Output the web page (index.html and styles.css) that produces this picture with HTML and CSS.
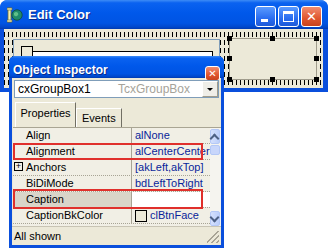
FILE: index.html
```html
<!DOCTYPE html>
<html lang="en">
<head>
    <meta charset="UTF-8">
    <title>Edit Color</title>
    <link rel="stylesheet" href="styles.css">
</head>
<body>

<div class="desk">

    <!-- form being designed -->
    <div class="win edit">
        <div class="caption">
            <svg class="appicon" width="16" height="16" viewBox="0 0 16 16">
                <rect x="1" y="1" width="3" height="14" fill="#f4f0b0" stroke="#6b6a3a" stroke-width="0.8"/>
                <rect x="0" y="1" width="5" height="2" fill="#f4f0b0" stroke="#6b6a3a" stroke-width="0.6"/>
                <rect x="0" y="13" width="5" height="2" fill="#f4f0b0" stroke="#6b6a3a" stroke-width="0.6"/>
                <circle cx="10" cy="8" r="5.2" fill="#1f8a6a" stroke="#0d4a3a" stroke-width="0.8"/>
                <path d="M7 6 q2 -2 4 0 q1 2 -1 3 q-2 1 -3 -1z" fill="#5fc08a"/>
            </svg>
            <span class="title">Edit Color</span>
            <div class="capbtns">
                <div class="capbtn"><span class="g-min"></span></div>
                <div class="capbtn"><span class="g-max"></span></div>
                <div class="capbtn close"><span class="g-x">&#x2715;</span></div>
            </div>
        </div>
        <div class="client">
            <div class="groupbox">
                <div class="check"></div>
                <div class="field"></div>
            </div>
            <div class="panel">
                <span class="h h1"></span><span class="h h2"></span><span class="h h3"></span>
                <span class="h h4"></span><span class="h h5"></span>
                <span class="h h6"></span><span class="h h7"></span><span class="h h8"></span>
            </div>
        </div>
    </div>

    <!-- object inspector -->
    <div class="win oi">
        <div class="caption small">
            <span class="title">Object Inspector</span>
            <div class="capbtn close mini"><span class="g-x">&#x2715;</span></div>
        </div>
        <div class="client">
            <div class="combo">
                <span class="cname">cxGroupBox1</span>
                <span class="ctype">TcxGroupBox</span>
                <div class="dropbtn"><span class="arrow"></span></div>
            </div>
            <div class="tabs">
                <div class="tab active">Properties</div>
                <div class="tab">Events</div>
            </div>
            <div class="grid">
                <div class="rows">
                    <div class="row"><div class="name">Align</div><div class="val">alNone</div></div>
                    <div class="row"><div class="name">Alignment</div><div class="val">alCenterCenter</div></div>
                    <div class="row"><div class="name"><span class="plus">+</span>Anchors</div><div class="val">[akLeft,akTop]</div></div>
                    <div class="row"><div class="name">BiDiMode</div><div class="val">bdLeftToRight</div></div>
                    <div class="row sel"><div class="name">Caption</div><div class="val"></div></div>
                    <div class="row"><div class="name">CaptionBkColor</div><div class="val"><span class="swatch"></span>clBtnFace</div></div>
                    <div class="mark m1"></div>
                    <div class="mark m2"></div>
                </div>
                <div class="scroll">
                    <div class="sbtn"><span class="up"></span></div>
                    <div class="thumb"></div>
                    <div class="track"></div>
                    <div class="sbtn"><span class="down"></span></div>
                </div>
            </div>
            <div class="status">
                <span>All shown</span>
                <span class="grip"></span>
            </div>
        </div>
    </div>

</div>

</body>
</html>
```

FILE: styles.css
```css
body {
    margin: 0;
    background: #ffffff;
    font-family: "Liberation Sans", Arial, sans-serif;
}
.desk {
    position: relative;
    width: 328px;
    height: 248px;
    overflow: hidden;
}

/* window frames */
.win {
    display: flex;
    flex-direction: column;
    background: #0a4fdc;
    box-sizing: border-box;
}
.caption {
    display: flex;
    align-items: center;
    height: 29px;
    flex: none;
    border-radius: 7px 7px 0 0;
    background: linear-gradient(to bottom, #3d8cf6 0%, #0a62f0 10%, #0058ea 45%, #0054e3 80%, #0048cc 93%, #003ab0 100%);
}
.caption .title {
    color: #ffffff;
    font-weight: bold;
    font-size: 13px;
    text-shadow: 1px 1px #0b2a8a;
}
.appicon {
    margin: 1px 5px 0 7px;
}

.capbtns {
    display: flex;
    gap: 2px;
    margin-left: auto;
    margin-right: 6px;
    margin-top: 3px;
}
.capbtn {
    width: 19px;
    height: 19px;
    border: 1px solid #ffffff;
    border-radius: 3px;
    background: linear-gradient(to bottom, #5a9bff, #2a6df0 60%, #1e5ad8);
    position: relative;
    display: flex;
    align-items: center;
    justify-content: center;
}
.capbtn.close {
    background: linear-gradient(to bottom, #f08c70, #e0562e 60%, #c8421c);
}
.g-min {
    position: absolute;
    left: 5px;
    bottom: 4px;
    width: 7px;
    height: 3px;
    background: #ffffff;
}
.g-max {
    width: 9px;
    height: 7px;
    border: 1px solid #ffffff;
    border-top-width: 3px;
}
.g-x {
    color: #ffffff;
    font-family: "DejaVu Sans", sans-serif;
    font-weight: bold;
    font-size: 13px;
    line-height: 1;
}

/* Edit Color form */
.edit {
    width: 328px;
    height: 92px;
    border-radius: 8px 8px 0 0;
}
.edit .client {
    position: relative;
    flex: 1;
    margin: 0 5px 4px 4px;
    background-color: #ece9d8;
    background-image:
        linear-gradient(90deg, #ece9d8 3px, transparent 3px),
        linear-gradient(#ece9d8 3px, #000000 3px);
    background-size: 4px 8px;
    background-position: -3px 0;
}
.groupbox {
    position: absolute;
    left: 9px;
    top: 10px;
    width: 205px;
    height: 46px;
    border: 1px solid #7f9db9;
    background: #ece9d8;
}
.check {
    position: absolute;
    left: 7px;
    top: 6px;
    width: 10px;
    height: 20px;
    border: 1px solid #000000;
}
.field {
    position: absolute;
    left: 18px;
    top: 11px;
    width: 179px;
    height: 20px;
    border: 1px solid #000000;
    background: #ffffff;
}
.panel {
    position: absolute;
    left: 225px;
    top: 9px;
    width: 86px;
    height: 40px;
    border: 1px solid #a09c8c;
    background: #ece9d8;
}
.h {
    position: absolute;
    width: 5px;
    height: 5px;
    background: #000000;
}
.h1 { left: -3px; top: -3px; }
.h2 { left: 40px; top: -3px; }
.h3 { right: -3px; top: -3px; }
.h4 { left: -3px; top: 17px; }
.h5 { right: -3px; top: 17px; }
.h6 { left: -3px; bottom: -3px; }
.h7 { left: 40px; bottom: -3px; }
.h8 { right: -3px; bottom: -3px; }

/* Object Inspector */
.oi {
    position: absolute;
    left: 9px;
    top: 56px;
    width: 215px;
    height: 192px;
    border-radius: 6px 6px 0 0;
}
.caption.small {
    height: 22px;
    border-radius: 6px 6px 0 0;
}
.caption.small .title {
    font-size: 12px;
    margin-left: 4px;
    margin-top: 6px;
}
.capbtn.mini {
    width: 13px;
    height: 13px;
    margin-left: auto;
    margin-right: 4px;
    margin-top: 13px;
}
.capbtn.mini .g-x {
    font-size: 10px;
}
.oi .client {
    flex: 1;
    display: flex;
    flex-direction: column;
    margin: 0 3px 3px 3px;
    background: #ece9d8;
    font-size: 11px;
}
.combo {
    display: flex;
    align-items: center;
    position: relative;
    margin: 2px 2px 0 2px;
    height: 18px;
    border: 1px solid #7f9db9;
    background: #ffffff;
    font-size: 12px;
    box-sizing: border-box;
}
.cname {
    margin-left: 3px;
    width: 100px;
}
.ctype {
    color: #a6a39a;
}
.dropbtn {
    position: absolute;
    right: 0;
    top: 0;
    width: 16px;
    height: 16px;
    background: #efeee8;
    border: 1px solid #ffffff;
    border-right-color: #a09c8c;
    border-bottom-color: #a09c8c;
    box-sizing: border-box;
    display: flex;
    align-items: center;
    justify-content: center;
}
.arrow {
    border: 3px solid transparent;
    border-top: 3px solid #000000;
    margin-top: 3px;
}

.tabs {
    display: flex;
    align-items: flex-end;
    height: 26px;
    padding-left: 3px;
    margin-top: 3px;
    flex: none;
}
.tab {
    display: flex;
    align-items: center;
    justify-content: center;
    height: 19px;
    padding: 0 5px;
    border: 1px solid #ffffff;
    border-right-color: #716f64;
    border-bottom: none;
    box-sizing: border-box;
}
.tab.active {
    width: 61px;
    height: 25px;
    padding-bottom: 4px;
}

.grid {
    display: flex;
    height: 98px;
    margin-left: 1px;
    border-top: 1px solid #a9a593;
    flex: none;
}
.rows {
    position: relative;
    flex: 1;
    background: #f1efe5;
}
.row {
    display: flex;
    height: 16px;
    border-bottom: 1px dotted #a8a495;
    box-sizing: border-box;
}
.name {
    width: 105px;
    padding-left: 13px;
    border-right: 1px solid #a8a495;
    line-height: 15px;
    position: relative;
}
.val {
    flex: 1;
    padding-left: 3px;
    color: #0a1f9a;
    line-height: 15px;
    display: flex;
    align-items: center;
}
.plus {
    position: absolute;
    left: 1px;
    top: 2px;
    width: 9px;
    height: 9px;
    border: 1px solid #000000;
    box-sizing: border-box;
    font-size: 9px;
    line-height: 7px;
    text-align: center;
}
.sel .name {
    background: #d9d5c9;
}
.sel .val {
    background: #ffffff;
}
.swatch {
    width: 10px;
    height: 10px;
    border: 1px solid #000000;
    background: #ece9d8;
    margin-right: 3px;
}
.mark {
    position: absolute;
    left: 0;
    width: 190px;
    border: 2px solid #e0302c;
    box-sizing: border-box;
}
.m1 { top: 15px; height: 17px; }
.m2 { top: 61px; height: 20px; }

.scroll {
    width: 16px;
    display: flex;
    flex-direction: column;
    background: #f5f4ef;
}
.sbtn {
    height: 15px;
    margin: 1px 1px 0 0;
    border: 1px solid #b4c8f6;
    border-radius: 2px;
    background: linear-gradient(to right, #d4e0fd, #bccffa);
    display: flex;
    align-items: center;
    justify-content: center;
    box-sizing: border-box;
    flex: none;
}
.up, .down {
    width: 5px;
    height: 5px;
    border-left: 2px solid #4d6185;
    border-top: 2px solid #4d6185;
    transform: rotate(45deg);
    margin-top: 3px;
}
.down {
    transform: rotate(225deg);
    margin-top: -3px;
}
.thumb {
    height: 8px;
    margin: 1px 1px 0 0;
    border: 1px solid #b4c8f6;
    border-radius: 2px;
    background: #c8d6fb;
    flex: none;
}
.track {
    flex: 1;
}

.status {
    display: flex;
    align-items: center;
    position: relative;
    flex: 1;
    padding-left: 2px;
    border-top: 1px solid #c8c4b4;
}
.grip {
    position: absolute;
    right: 2px;
    bottom: 2px;
    width: 12px;
    height: 12px;
    background: linear-gradient(135deg, transparent 45%, #a8a495 45%, #a8a495 52%, transparent 52%, transparent 65%, #a8a495 65%, #a8a495 72%, transparent 72%, transparent 85%, #a8a495 85%, #a8a495 92%, transparent 92%);
}
```
